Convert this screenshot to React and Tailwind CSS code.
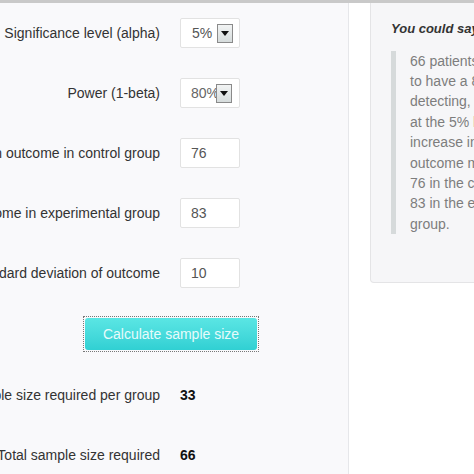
import React from "react";

function Arrow() {
  return (
    <span className="flex h-[19px] w-[16px] items-center justify-center border border-[#8a8a8a] bg-gradient-to-b from-[#f2f4f4] to-[#d6dcdc]">
      <svg width="8" height="5" viewBox="0 0 8 5">
        <path d="M0 0 L8 0 L4 5 Z" fill="#111" />
      </svg>
    </span>
  );
}

function Row({ label, children }) {
  return (
    <div className="flex h-[30px] items-center">
      <div className="flex w-[160px] shrink-0 justify-end">
        <span className="shrink-0 whitespace-nowrap text-[14px] text-[#333]">{label}</span>
      </div>
      <div className="ml-[20px]">{children}</div>
    </div>
  );
}

function Input({ value }) {
  return (
    <div className="flex h-[30px] w-[60px] items-center rounded-[2px] border border-[#e2e2e2] bg-white pl-[10px] text-[14px] text-[#555]">
      {value}
    </div>
  );
}

export default function App() {
  const lines = [
    "66 patients are required",
    "to have a 80% chance of",
    "detecting, as significant",
    "at the 5% level, an",
    "increase in the primary",
    "outcome measure from",
    "76 in the control group to",
    "83 in the experimental",
    "group.",
  ];
  return (
    <div className="h-[474px] w-[474px] overflow-hidden bg-white [font-family:'Liberation_Sans',Arial,sans-serif]">
      <div className="h-[3px] bg-[#c9c9c9]" />
      <div className="flex h-[471px]">
        <div className="flex w-[349px] shrink-0 flex-col gap-[30px] border-r border-[#e6e7ea] bg-[#f9f9fb] pt-[15px]">
          <Row label="Significance level (alpha)">
            <div className="flex h-[30px] w-[60px] items-center rounded-[2px] border border-[#e2e2e2] bg-white pl-[11px] text-[14px] text-[#555]">
              <span className="w-[25px]">5%</span>
              <Arrow />
            </div>
          </Row>
          <Row label="Power (1-beta)">
            <div className="relative flex h-[30px] w-[60px] items-center rounded-[2px] border border-[#e2e2e2] bg-white pl-[10px] text-[14px] text-[#666]">
              <span>80%</span>
              <span className="absolute left-[35px] top-[5px]"><Arrow /></span>
            </div>
          </Row>
          <Row label="Mean outcome in control group">
            <Input value="76" />
          </Row>
          <Row label="Mean outcome in experimental group">
            <Input value="83" />
          </Row>
          <Row label="Standard deviation of outcome">
            <Input value="10" />
          </Row>
          <div className="ml-[85px] w-[172px] outline-1 outline-dotted outline-offset-1 outline-[#777]">
            <div className="flex h-[32px] items-center justify-center rounded-[3px] bg-gradient-to-b from-[#5ae6e4] to-[#30d0d3] text-[14px] text-[#e6fbfb]">
              Calculate sample size
            </div>
          </div>
          <Row label="Sample size required per group">
            <span className="text-[14px] font-bold text-[#111]">33</span>
          </Row>
          <Row label="Total sample size required">
            <span className="text-[14px] font-bold text-[#111]">66</span>
          </Row>
        </div>
        <div className="w-[21px] shrink-0 bg-white" />
        <div className="flex-1">
          <div className="h-[280px] w-[130px] rounded-b-[4px] border border-t-0 border-[#e4e4e6] bg-[#f6f6f8] pl-[20px] pt-[16px]">
            <div className="whitespace-nowrap text-[13px] font-bold italic text-[#333]">
              You could say:
            </div>
            <div className="mt-[12px] border-l-[5px] border-[#d6dadb] pl-[14px] text-[14px] leading-[20.4px] text-[#7d7d7d]">
              {lines.map((l, i) => (
                <div key={i} className="whitespace-nowrap">{l}</div>
              ))}
            </div>
          </div>
        </div>
      </div>
    </div>
  );
}
